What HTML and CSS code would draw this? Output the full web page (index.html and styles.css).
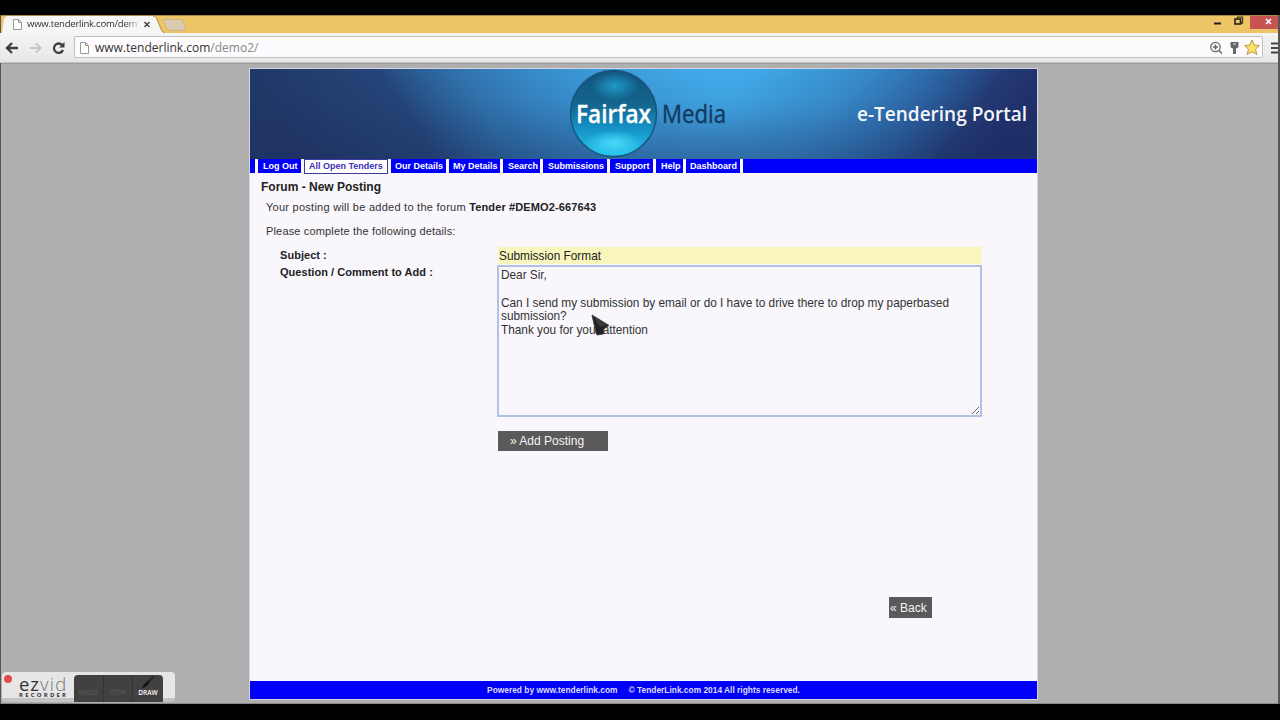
FILE: index.html
```html
<!DOCTYPE html>
<html lang="en">
<head>
    <meta charset="UTF-8">
    <meta name="viewport" content="width=device-width, initial-scale=1.0">
    <title>Forum - New Posting</title>
    <link rel="stylesheet" href="styles.css">
</head>
<body>
    <div class="window">
        <div class="tab-strip">
            <svg class="tabs" width="190" height="18" viewBox="0 0 190 18">
                <path d="M2 18 L4 4 Q5 1 8 1 H152 Q155 1 156 3 L161 15 Q162 18 165 18 Z" fill="#f7f6f7"/>
                <path d="M152 0.5 Q155 1 156.500 3 L161.500 15 Q162.500 17.500 165 17.500" fill="none" stroke="#b59145"/>
                <path d="M163 4.500 H180 Q182 4.500 183 6 L185.500 13 Q186 15.500 184 15.500 H170 Q168 15.500 167 13.500 L163.500 6 Q163 4.500 165 4.500 Z" fill="#dacbb1" stroke="#cbb58a"/>
                <path d="M13.500 4.500 H18.500 L21.500 7.500 V14.500 H13.500 Z M18.500 4.500 V7.500 H21.500" fill="#fff" stroke="#999"/>
                <path d="M144.500 7 L149.500 12 M149.500 7 L144.500 12" stroke="#444" stroke-width="1.500"/>
            </svg>
            <span class="tab-title">www.tenderlink.com/dem</span>
            <svg class="window-buttons" width="80" height="18" viewBox="0 0 80 18">
                <rect x="50" y="0" width="28" height="13" fill="#c75452"/>
                <path d="M14 7.500 H21" stroke="#222" stroke-width="2"/>
                <path d="M37.500 2.500 V1.200 H42.500 V7 H41" fill="none" stroke="#4a3d20" stroke-width="1.300"/>
                <rect x="35" y="3" width="5.500" height="5" fill="#eec566" stroke="#222" stroke-width="1.600"/>
                <path d="M66 3 L71 8 M71 3 L66 8" stroke="#fff" stroke-width="1.700"/>
            </svg>
        </div>

        <div class="toolbar">
            <svg width="74" height="28" viewBox="0 0 74 28">
                <path d="M7 15 H18 M12 10 L7 15 L12 20" fill="none" stroke="#3d3d3d" stroke-width="2.300"/>
                <path d="M30 15 H41 M36 10.500 L40.500 15 L36 19.500" fill="none" stroke="#c6c6c6" stroke-width="2"/>
                <path d="M62.500 12.500 A4.700 4.700 0 1 0 63 17" fill="none" stroke="#3d3d3d" stroke-width="2.300"/>
                <path d="M64.500 9 V14.500 H59 Z" fill="#3d3d3d"/>
            </svg>
            <div class="address">
                <svg width="20" height="21" viewBox="0 0 20 21">
                    <path d="M5.500 5.500 H10.500 L13.500 8.500 V16.500 H5.500 Z M10.500 5.500 V8.500 H13.500" fill="#fff" stroke="#999"/>
                </svg>
                <span class="url">www.tenderlink.com<span class="path">/demo2/</span></span>
                <svg class="address-icons" width="54" height="21" viewBox="0 0 54 21">
                    <circle cx="7.500" cy="10" r="4.700" fill="none" stroke="#666" stroke-width="1.300"/>
                    <path d="M5 10 H10 M7.500 7.500 V12.500 M11 13.500 L14 16.500" stroke="#666" stroke-width="1.500"/>
                    <path d="M22.500 5 H30.500 V9.500 Q30 11.500 28 11.500 V17 H25 V11.500 Q22.500 11 22.500 9 Z" fill="#666"/>
                    <path d="M25 7 H28" stroke="#ddd"/>
                    <path d="M44 3 L46.200 8 L51.500 8.500 L47.500 12.200 L48.800 17.500 L44 14.700 L39.200 17.500 L40.500 12.200 L36.500 8.500 L41.800 8 Z" fill="#fbe06b" stroke="#b79b45"/>
                </svg>
            </div>
            <svg width="15" height="28" viewBox="0 0 15 28">
                <path d="M8 10.500 H15 M8 15 H15 M8 19.500 H15" stroke="#444" stroke-width="2"/>
            </svg>
        </div>

        <div class="viewport">
            <div class="page">
                <svg class="banner" width="787" height="90" viewBox="0 0 787 90">
                    <defs>
                        <linearGradient id="sky" x1="0" y1="0" x2="0" y2="1">
                            <stop offset="0" stop-color="#41aae9"/>
                            <stop offset="0.500" stop-color="#3f9fdd"/>
                            <stop offset="1" stop-color="#377fb8"/>
                        </linearGradient>
                        <linearGradient id="left" gradientUnits="userSpaceOnUse" x1="0" y1="0" x2="450" y2="0" gradientTransform="skewX(35)">
                            <stop offset="0" stop-color="#213768"/>
                            <stop offset="0.280" stop-color="#233f72" stop-opacity="0.950"/>
                            <stop offset="0.450" stop-color="#26528a" stop-opacity="0.650"/>
                            <stop offset="0.700" stop-color="#2b6aa8" stop-opacity="0.350"/>
                            <stop offset="1" stop-color="#2b6aa8" stop-opacity="0"/>
                        </linearGradient>
                        <linearGradient id="right" gradientUnits="userSpaceOnUse" x1="500" y1="0" x2="800" y2="0" gradientTransform="skewX(-35)">
                            <stop offset="0" stop-color="#2b6aa8" stop-opacity="0"/>
                            <stop offset="0.350" stop-color="#2b65a5" stop-opacity="0.400"/>
                            <stop offset="0.650" stop-color="#26508f" stop-opacity="0.800"/>
                            <stop offset="0.850" stop-color="#233a73"/>
                            <stop offset="1" stop-color="#20306a"/>
                        </linearGradient>
                        <linearGradient id="shade" x1="0" y1="0" x2="0" y2="1">
                            <stop offset="0.300" stop-color="#10204a" stop-opacity="0"/>
                            <stop offset="1" stop-color="#10204a" stop-opacity="0.150"/>
                        </linearGradient>
                        <linearGradient id="ball" x1="0" y1="0" x2="0" y2="1">
                            <stop offset="0" stop-color="#12557e"/>
                            <stop offset="0.400" stop-color="#14658f"/>
                            <stop offset="0.650" stop-color="#148fc4"/>
                            <stop offset="1" stop-color="#24c4ee"/>
                        </linearGradient>
                        <radialGradient id="glow">
                            <stop offset="0" stop-color="#1fa0cf" stop-opacity="0.900"/>
                            <stop offset="1" stop-color="#1fa0cf" stop-opacity="0"/>
                        </radialGradient>
                        <radialGradient id="shine">
                            <stop offset="0" stop-color="#4de0fb" stop-opacity="0.900"/>
                            <stop offset="1" stop-color="#4de0fb" stop-opacity="0"/>
                        </radialGradient>
                    </defs>
                    <rect width="787" height="90" fill="url(#sky)"/>
                    <rect width="787" height="90" fill="url(#left)"/>
                    <rect width="787" height="90" fill="url(#right)"/>
                    <rect width="787" height="90" fill="url(#shade)"/>
                    <circle cx="363.500" cy="44.500" r="43" fill="url(#ball)" stroke="#17547d" stroke-width="1.500"/>
                    <ellipse cx="365" cy="17" rx="24" ry="14" fill="url(#glow)"/>
                    <ellipse cx="364" cy="74" rx="29" ry="13" fill="url(#shine)"/>
                    <text class="logo-bold" x="326" y="53.500" textLength="75" lengthAdjust="spacingAndGlyphs">Fairfax</text>
                    <text class="logo-light" x="412" y="53.500" textLength="64" lengthAdjust="spacingAndGlyphs">Media</text>
                    <text class="portal" x="607" y="51.500" textLength="170" lengthAdjust="spacingAndGlyphs">e-Tendering Portal</text>
                </svg>

                <nav class="menu">
                    <a>Log Out</a>
                    <a class="active">All Open Tenders</a>
                    <a>Our Details</a>
                    <a>My Details</a>
                    <a>Search</a>
                    <a>Submissions</a>
                    <a>Support</a>
                    <a>Help</a>
                    <a>Dashboard</a>
                </nav>

                <main class="content">
                    <h1>Forum - New Posting</h1>
                    <p class="intro">Your posting will be added to the forum <b>Tender #DEMO2-667643</b></p>
                    <p class="instructions">Please complete the following details:</p>

                    <form class="posting">
                        <label for="subject">Subject :</label>
                        <input type="text" id="subject" name="subject" value="Submission Format">
                        <label for="comment">Question / Comment to Add :</label>
                        <textarea id="comment" name="comment" spellcheck="false">Dear Sir,

Can I send my submission by email or do I have to drive there to drop my paperbased submission?
Thank you for your attention</textarea>
                        <button type="button" class="add">» Add Posting</button>
                    </form>

                    <button type="button" class="back">« Back</button>
                </main>

                <footer class="footer">
                    <span>Powered by www.tenderlink.com</span>
                    <span>© TenderLink.com 2014 All rights reserved.</span>
                </footer>
            </div>
        </div>
    </div>

    <div class="recorder">
        <span class="dot"></span>
        <div class="recorder-logo">
            <div class="name">ez<span>vid</span></div>
            <div class="rec">RECORDER</div>
        </div>
        <div class="controls">
            <span class="off">PAUSE</span>
            <span class="off">STOP</span>
            <span class="draw">
                <svg width="16" height="14" viewBox="0 0 16 14">
                    <path d="M13.500 1 L7 8" stroke="#111" stroke-width="2.500"/>
                    <path d="M13.800 0.500 L9 5.500" stroke="#777" stroke-width="0.700"/>
                    <path d="M7.500 7 Q3 9 2 13 Q7 12 8.500 8.500 Z" fill="#111"/>
                </svg>
                DRAW
            </span>
        </div>
    </div>

    <svg class="cursor" width="22" height="26" viewBox="0 0 22 26">
        <path d="M2 2 L19 12.500 L14 15.500 L13.500 21 L7 22 L6 20 Z" fill="#222" stroke="#444"/>
        <path d="M3 3 L17 12.500 L10 14 Z" fill="#3a3a3a"/>
    </svg>
</body>
</html>
```
FILE: styles.css
```css
* {
    box-sizing: border-box;
    margin: 0;
    padding: 0;
}

body {
    width: 1280px;
    height: 720px;
    padding: 15px 0 16px;
    background: #000;
    font-family: "Liberation Sans", Arial, sans-serif;
    overflow: hidden;
}

svg {
    display: block;
    flex: none;
}

/* browser window */
.window {
    display: flex;
    flex-direction: column;
    height: 689px;
    border-left: 1px solid #555;
    border-right: 2px solid #555;
}

.tab-strip {
    position: relative;
    display: flex;
    justify-content: space-between;
    height: 18px;
    background: #eec566;
    border-top: 1px solid #a98a48;
}

.tabs {
    margin: -1px 0 0 -1px;
}

.window-buttons {
    margin-right: -2px;
}

.tab-title {
    position: absolute;
    left: 26px;
    top: 1px;
    font: 9.6px/14px "Open Sans", sans-serif;
    letter-spacing: -0.26px;
    color: #333;
    white-space: nowrap;
    -webkit-mask-image: linear-gradient(to right, #000 88%, rgba(0, 0, 0, 0.3));
    mask-image: linear-gradient(to right, #000 88%, rgba(0, 0, 0, 0.3));
}

.toolbar {
    display: flex;
    align-items: center;
    height: 30px;
    padding-bottom: 1px;
    margin-left: -1px;
    background: linear-gradient(#f5f4f5, #e8e7e8);
    border-bottom: 1px solid #c4c4c4;
}

.address {
    display: flex;
    align-items: center;
    flex: 1;
    height: 22px;
    background: #fdfbfd;
    border: 1px solid #c0bfc0;
    border-radius: 2px;
}

.url {
    padding-top: 2px;
    font: 12px/20px "Open Sans", sans-serif;
    color: #333;
}

.path {
    color: #888;
}

.address-icons {
    margin-left: auto;
}

.viewport {
    flex: 1;
    padding: 4px 0 0 248px;
    background: #afafaf;
    border-top: 1px solid #9c9c9c;
    border-bottom: 1px solid #8a8a8a;
}

/* tender site */
.page {
    display: flex;
    flex-direction: column;
    width: 789px;
    height: 632px;
    background: #f9f7fb;
    border: 1px solid #d4d4e2;
}

.logo-bold {
    font: 600 26px "Open Sans", sans-serif;
    fill: #fff;
    stroke: #fff;
    stroke-width: 0.3px;
}

.logo-light {
    font: 26px "Open Sans", sans-serif;
    fill: #12395f;
    stroke: #12395f;
    stroke-width: 0.4px;
}

.portal {
    font: 600 20px "Open Sans", sans-serif;
    fill: #f4f6fb;
}

.menu {
    display: grid;
    grid-template-columns: 46px 87px 58px 54px 40px 67px 46px 30px 58px;
    flex: none;
    height: 14px;
    padding-left: 5px;
    background: #0000fa;
    color: #fff;
    font-size: 9px;
    font-weight: bold;
    line-height: 15px;
    white-space: nowrap;
}

.menu a {
    padding-left: 5px;
    border-left: 3px solid #f9f7fb;
}

.menu a:nth-child(3),
.menu a:nth-child(4) {
    padding-left: 4px;
}

.menu a:last-child {
    width: 60px;
    padding-left: 4px;
    border-right: 3px solid #f9f7fb;
}

.menu .active {
    background: #fff;
    color: #3a30b8;
    box-shadow: inset 0 0 0 1px #3a3aa0;
}

.content {
    flex: 1;
    padding: 7px 0 0 11px;
    color: #333;
    font-size: 11px;
}

.content h1 {
    margin-bottom: 6px;
    font-size: 12px;
    line-height: 14px;
    color: #222;
}

.content p {
    padding-left: 5px;
    line-height: 14px;
    letter-spacing: 0.16px;
}

.content .intro {
    letter-spacing: 0.26px;
}

.content .instructions {
    margin-top: 10px;
}

.content b {
    color: #222;
    letter-spacing: 0.12px;
}

.posting {
    display: grid;
    grid-template-columns: 218px 485px;
    grid-template-rows: 18px 152px 21px;
    margin-top: 9px;
    padding-left: 18px;
}

.posting label {
    padding-left: 1px;
    line-height: 14px;
    font-weight: bold;
    letter-spacing: 0.04px;
    color: #222;
}

.posting label:first-child {
    padding-top: 1px;
}

.posting input {
    height: 17px;
    width: 484px;
    margin-left: 1px;
    padding: 0 1px;
    border: none;
    background: #f8f6bd;
    font: 11.85px "Liberation Sans", Arial, sans-serif;
    color: #222;
}

.posting textarea {
    width: 485px;
    height: 152px;
    padding: 2px;
    border: 2px solid #b1c1e5;
    outline: none;
    background: #f9f7fb;
    font: 11.85px/13.75px "Liberation Sans", Arial, sans-serif;
    letter-spacing: -0.02px;
    color: #333;
}

button {
    border: none;
    background: #5b5a5b;
    color: #f4f4f4;
    font: 12px "Liberation Sans", Arial, sans-serif;
    text-align: left;
}

.add {
    grid-column: 2;
    width: 110px;
    height: 20px;
    margin: 14px 0 0 1px;
    padding: 0 0 0 12px;
}

.back {
    display: block;
    width: 43px;
    height: 21px;
    margin: 159px 0 0 628px;
    padding: 1px 0 0 1px;
}

.footer {
    display: flex;
    justify-content: center;
    gap: 11px;
    height: 18px;
    background: #0000fa;
    color: #dcdcff;
    font-size: 8.4px;
    font-weight: bold;
    line-height: 18px;
}

/* screen recorder panel */
.recorder {
    position: absolute;
    left: 2px;
    top: 672px;
    display: flex;
    width: 173px;
    height: 30px;
    background: linear-gradient(#e6e6e6 86%, #c4c4c4 86%);
    border-radius: 4px;
}

.dot {
    width: 8px;
    height: 8px;
    margin: 3px 0 0 2px;
    border-radius: 50%;
    background: #e04a4c;
}

.recorder-logo {
    width: 54px;
    margin: 3px 0 0 6px;
    padding-left: 1px;
    color: #333;
    font-family: "Open Sans", sans-serif;
    white-space: nowrap;
}

.name {
    height: 17px;
    font-size: 18.5px;
    line-height: 17px;
    letter-spacing: 0.9px;
}

.name span {
    font-weight: 300;
    letter-spacing: 1.4px;
    color: #777;
}

.rec {
    font-size: 6px;
    font-weight: bold;
    line-height: 7px;
    letter-spacing: 2.2px;
}

.controls {
    display: grid;
    grid-template-columns: 30px 29px 30px;
    height: 27px;
    margin: 3px 0 0 2px;
    background: #414141;
    border-radius: 4px 4px 0 0;
    font: 600 6.5px/8px "Open Sans", sans-serif;
    text-align: center;
}

.controls .off {
    padding-top: 14px;
    border-right: 1px solid #333;
    color: #575757;
}

.draw {
    display: flex;
    flex-direction: column;
    align-items: center;
    color: #fff;
}

/* mouse pointer */
.cursor {
    position: absolute;
    left: 590px;
    top: 313px;
}
```
